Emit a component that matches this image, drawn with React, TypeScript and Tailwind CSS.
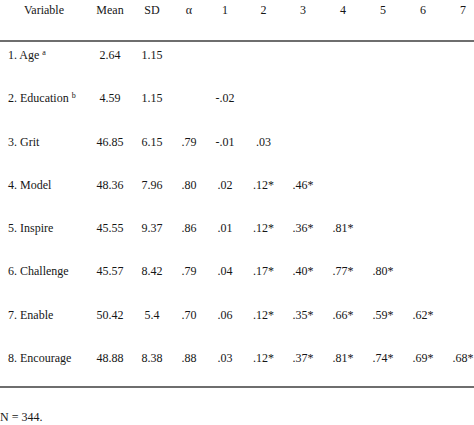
const headers = ['Mean', 'SD', 'α', '1', '2', '3', '4', '5', '6', '7'];

type Row = { label: string; sup?: string; cells: string[] };

const rows: Row[] = [
  { label: '1. Age', sup: 'a', cells: ['2.64', '1.15', '', '', '', '', '', '', '', ''] },
  { label: '2. Education', sup: 'b', cells: ['4.59', '1.15', '', '-.02', '', '', '', '', '', ''] },
  { label: '3. Grit', cells: ['46.85', '6.15', '.79', '-.01', '.03', '', '', '', '', ''] },
  { label: '4. Model', cells: ['48.36', '7.96', '.80', '.02', '.12*', '.46*', '', '', '', ''] },
  { label: '5. Inspire', cells: ['45.55', '9.37', '.86', '.01', '.12*', '.36*', '.81*', '', '', ''] },
  { label: '6. Challenge', cells: ['45.57', '8.42', '.79', '.04', '.17*', '.40*', '.77*', '.80*', '', ''] },
  { label: '7. Enable', cells: ['50.42', '5.4', '.70', '.06', '.12*', '.35*', '.66*', '.59*', '.62*', ''] },
  { label: '8. Encourage', cells: ['48.88', '8.38', '.88', '.03', '.12*', '.37*', '.81*', '.74*', '.69*', '.68*'] },
];

const grid = 'grid grid-cols-[88px_44px_40px_34px_38px_39px_40px_40px_40px_40px_40px] leading-[14px]';

export default function App() {
  return (
    <div className="w-[474px] h-[425px] overflow-hidden bg-white text-[12px] text-[#161616] font-['Liberation_Serif','Times_New_Roman',serif]">
      <div className={`${grid} pt-[3px]`}>
        <div className="text-center">Variable</div>
        {headers.map((h) => (
          <div key={h} className="text-center">
            {h}
          </div>
        ))}
      </div>
      <div className="mt-[23px] h-[2px] w-[483px] bg-[#6e6e6e]" />
      <div className="flex flex-col gap-[29.3px] pt-[6px]">
        {rows.map((r) => (
          <div key={r.label} className={grid}>
            <div className="pl-[8px] whitespace-nowrap">
              {r.label}
              {r.sup && <sup className="ml-[3px] text-[8px]">{r.sup}</sup>}
            </div>
            {r.cells.map((c, i) => (
              <div key={i} className="text-center whitespace-nowrap">
                {c}
              </div>
            ))}
          </div>
        ))}
      </div>
      <div className="mt-[21px] h-[2px] w-[483px] bg-[#6e6e6e]" />
      <div className="mt-[22px] leading-[14px]">N = 344.</div>
    </div>
  );
}
